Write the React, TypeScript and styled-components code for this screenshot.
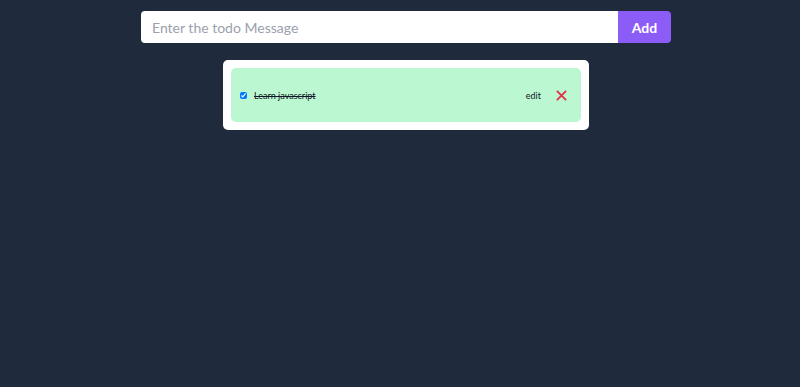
import * as React from 'react';
import styled, { createGlobalStyle } from 'styled-components';

const GlobalStyle = createGlobalStyle`
  html, body {
    margin: 0;
    padding: 0;
    background-color: #1f2a3c;
    font-family: Lato, "Open Sans", sans-serif;
  }
`;

const todos = [{ id: 1, text: 'Learn javascript', completed: true }];

export default function App() {
  const [message, setMessage] = React.useState('');

  return (
    <>
      <GlobalStyle />
      <Page>
        <TodoForm onSubmit={e => e.preventDefault()}>
          <TodoInput
            placeholder="Enter the todo Message"
            value={message}
            onChange={e => setMessage(e.target.value)}
          />
          <AddButton type="submit">Add</AddButton>
        </TodoForm>
        <TodoCard>
          {todos.map(todo => (
            <TodoItem key={todo.id}>
              <Check type="checkbox" defaultChecked={todo.completed} />
              <TodoText done={todo.completed}>{todo.text}</TodoText>
              <EditButton>edit</EditButton>
              <DeleteButton aria-label="delete">
                <svg width="11" height="11" viewBox="0 0 12 12">
                  <path
                    d="M1.5 1.5L10.5 10.5M10.5 1.5L1.5 10.5"
                    stroke="#e0314b"
                    strokeWidth="2"
                    strokeLinecap="round"
                  />
                </svg>
              </DeleteButton>
            </TodoItem>
          ))}
        </TodoCard>
      </Page>
    </>
  );
}

const Page = styled.div`
  min-height: 387px;
  padding: 11px 0 0 12px;
  box-sizing: border-box;
  display: flex;
  flex-direction: column;
  align-items: center;
`;

const TodoForm = styled.form`
  display: flex;
  width: 530px;
  height: 32px;
`;

const TodoInput = styled.input`
  flex: 1;
  border: none;
  outline: none;
  border-radius: 4px 0 0 4px;
  padding: 0 11px;
  font-family: inherit;
  font-size: 14px;
  color: #111827;
  background: #ffffff;

  &::placeholder {
    color: #9aa1ad;
  }
`;

const AddButton = styled.button`
  width: 53px;
  border: none;
  border-radius: 0 4px 4px 0;
  background-color: #8b5cf6;
  color: #ffffff;
  font-family: inherit;
  font-weight: 700;
  font-size: 14px;
  cursor: pointer;
`;

const TodoCard = styled.div`
  margin-top: 17px;
  width: 366px;
  box-sizing: border-box;
  padding: 8px;
  background: #ffffff;
  border-radius: 5px;
`;

const TodoItem = styled.div`
  display: flex;
  align-items: center;
  height: 54px;
  box-sizing: border-box;
  padding: 1px 14px 0 9px;
  background-color: #bbf7d0;
  border-radius: 5px;
`;

const Check = styled.input`
  width: 7px;
  height: 7px;
  margin: 0 7px 0 0;
`;

const TodoText = styled.span<{ done: boolean }>`
  flex: 1;
  font-size: 9px;
  color: #111827;
  text-decoration: ${p => (p.done ? 'line-through' : 'none')};
`;

const EditButton = styled.button`
  border: none;
  background: none;
  padding: 0;
  font-family: inherit;
  font-size: 9px;
  color: #111827;
  margin-right: 15px;
  cursor: pointer;
`;

const DeleteButton = styled.button`
  border: none;
  background: none;
  padding: 0;
  display: flex;
  cursor: pointer;
`;
